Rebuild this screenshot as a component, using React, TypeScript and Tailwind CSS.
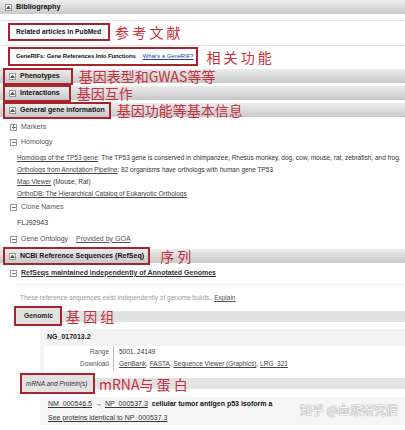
import React from "react";

const RED = "border-[#a9232d]";
const cn = "font-['Noto_Sans_CJK_SC',sans-serif] text-[#c4303c] text-[14px] leading-none";

function Tri() {
  return (
    <span className="inline-flex w-[7px] h-[7px] bg-white border border-[#999] items-center justify-center mr-[4px] shrink-0">
      <svg width="5" height="4" viewBox="0 0 5 4"><path d="M0 4 L2.5 0.5 L5 4 Z" fill="#555" /></svg>
    </span>
  );
}

function Box({ minus }: { minus?: boolean }) {
  return (
    <span className="inline-flex w-[7px] h-[7px] border border-[#999] items-center justify-center mr-[4px] shrink-0 relative">
      <span className="absolute w-[4px] h-px bg-[#777]" />
      {!minus && <span className="absolute h-[4px] w-px bg-[#777]" />}
    </span>
  );
}

function Bar({ title, pr, label }: { title: string; pr: string; label: string }) {
  return (
    <div className="h-[14px] flex items-center bg-gradient-to-b from-[#ececec] to-[#c9c9c9]">
      <div className={`ml-[3px] ${pr} h-[17px] border-2 ${RED} flex items-center pl-[4px] bg-gradient-to-b from-[#ececec] to-[#c9c9c9]`}>
        <Tri />
        <span className="font-bold text-[7px] text-[#111] whitespace-nowrap">{title}</span>
      </div>
      <span className={`${cn} ml-[6px]`}>{label}</span>
    </div>
  );
}

export default function App() {
  return (
    <div className="w-[405px] h-[430px] bg-white overflow-hidden relative font-['Liberation_Sans',Arial,sans-serif] text-[7px] text-[#333]">
      {/* Bibliography */}
      <div className="h-[14px] flex items-center pl-[5px] bg-gradient-to-b from-[#ededed] to-[#cacaca]">
        <Tri />
        <span className="font-bold text-[7.3px] text-[#111]">Bibliography</span>
      </div>
      <div className="mt-[6px] border-t border-[#e4e4e4]" />
      <div className="flex items-center mt-[2px] h-[18px]">
        <div className={`ml-[8px] h-[18px] border-2 ${RED} flex items-center pl-[6px] pr-[7px]`}>
          <span className="font-bold text-[6.7px] text-[#111] whitespace-nowrap">Related articles in PubMed</span>
        </div>
        <span className={`${cn} ml-[5px]`}>参 考 文 献</span>
      </div>
      <div className="mt-[4px] border-t border-[#e4e4e4]" />
      <div className="flex items-center mt-[1px] h-[19px]">
        <div className={`ml-[8px] h-[19px] border-2 ${RED} flex items-center pl-[6px] pr-[3px]`}>
          <span className="font-bold text-[6px] tracking-[-0.1px] text-[#111] whitespace-nowrap">GeneRIFs: Gene References Into Functions</span>
          <span className="ml-[7px] text-[5.8px] text-[#1d3f8a] underline whitespace-nowrap">What's a GeneRIF?</span>
        </div>
        <span className={`${cn} ml-[8px]`}>相 关 功 能</span>
      </div>
      <div className="mt-[3px] flex flex-col gap-[3px]">
        <Bar title="Phenotypes" pr="pr-[11px]" label="基因表型和GWAS等等" />
        <Bar title="Interactions" pr="pr-[9px]" label="基因互作" />
        <Bar title="General gene information" pr="pr-[4px]" label="基因功能等基本信息" />
      </div>

      <div className="pl-[10px] text-[#555]">
        <div className="mt-[5px] h-[10px] flex items-center"><Box /><span>Markers</span></div>
        <div className="mt-[5px] h-[10px] flex items-center"><Box minus /><span>Homology</span></div>
        <div className="mt-[5px] pl-[7px] text-[#333] leading-[12px] text-[6.5px] whitespace-nowrap">
          <div><span className="underline text-[#444]">Homologs of the TP53 gene</span>: The TP53 gene is conserved in chimpanzee, Rhesus monkey, dog, cow, mouse, rat, zebrafish, and frog.</div>
          <div><span className="underline text-[#444]">Orthologs from Annotation Pipeline</span>: 82 organisms have orthologs with human gene TP53</div>
          <div><span className="underline text-[#444]">Map Viewer</span> (Mouse, Rat)</div>
          <div><span className="underline text-[#444]">OrthoDB: The Hierarchical Catalog of Eukaryotic Orthologs</span></div>
        </div>
        <div className="mt-[2px] h-[10px] flex items-center"><Box minus /><span>Clone Names</span></div>
        <div className="mt-[6px] h-[10px] flex items-center pl-[7px] text-[#333]">FLJ92943</div>
        <div className="mt-[6px] h-[10px] flex items-center"><Box minus /><span>Gene Ontology</span><span className="ml-[8px] underline text-[#555]">Provided by GOA</span></div>
      </div>

      <div className="mt-[5px]">
        <div className="h-[14px] flex items-center bg-gradient-to-b from-[#ececec] to-[#c9c9c9]">
          <div className={`ml-[3px] h-[18px] border-2 ${RED} flex items-center pl-[4px] pr-[4px] bg-gradient-to-b from-[#ececec] to-[#c9c9c9]`}>
            <Tri />
            <span className="font-bold text-[7.1px] text-[#111] whitespace-nowrap">NCBI Reference Sequences (RefSeq)</span>
          </div>
          <span className={`${cn} ml-[10px]`}>序 列</span>
        </div>
      </div>

      <div className="pl-[10px]">
        <div className="mt-[5px] h-[10px] flex items-center"><Box minus /><span className="font-bold underline text-[#333] whitespace-nowrap text-[7px]">RefSeqs maintained independently of Annotated Genomes</span></div>
      </div>
      <div className="ml-[15px] mt-[6px] border-t border-[#ececec]" />
      <div className="mt-[8px] pl-[20px] h-[10px] flex items-center text-[#999] text-[6.5px] whitespace-nowrap">
        These reference sequences exist independently of genome builds.<span className="ml-[3px] underline text-[#555]">Explain</span>
      </div>

      {/* Genomic */}
      <div className="mt-[3px] ml-[15px] h-[20px] flex items-center">
        <div className="flex-1 h-[11px] bg-[#e2e2e2] flex items-center">
          <div className={`-ml-px w-[48px] h-[20px] border-2 ${RED} flex items-center pl-[8px] bg-[#e2e2e2]`}>
            <span className="font-bold text-[6.8px] text-[#222]">Genomic</span>
          </div>
          <span className={`${cn} ml-[4px]`}>基 因 组</span>
        </div>
      </div>

      <div className="mt-[3px] ml-[40px] bg-[#f3f3f3]">
        <div className="h-[17px] flex items-center pl-[7px] font-bold text-[#222] text-[7px]">NG_017013.2</div>
        <div className="bg-white ml-[4px] pb-[2px] text-[6.5px]">
          <div className="flex h-[12px] items-center">
            <span className="w-[70px] text-right pr-[4px] text-[#555] border-r border-[#bbb] h-full flex items-center justify-end">Range</span>
            <span className="pl-[5px] text-[#333]">5001..24149</span>
          </div>
          <div className="flex h-[12px] items-center">
            <span className="w-[70px] text-right pr-[4px] text-[#555] border-r border-[#bbb] h-full flex items-center justify-end">Download</span>
            <span className="pl-[5px] text-[#444] whitespace-nowrap"><span className="underline">GenBank</span>, <span className="underline">FASTA</span>, <span className="underline">Sequence Viewer (Graphics)</span>, <span className="underline">LRG_321</span></span>
          </div>
        </div>
      </div>

      {/* mRNA */}
      <div className="mt-[1px] ml-[20px] h-[21px] flex items-center">
        <div className="flex-1 h-[11px] bg-[#e2e2e2] flex items-center">
          <div className={`w-[75px] h-[21px] border-2 ${RED} flex items-center pl-[4px] bg-[#e2e2e2]`}>
            <span className="italic text-[6.5px] text-[#333] whitespace-nowrap">mRNA and Protein(s)</span>
          </div>
          <span className={`${cn} ml-[4px]`}>mRNA与 蛋 白</span>
        </div>
      </div>

      <div className="mt-[3px] ml-[40px] bg-[#f6f6f6] pl-[8px] text-[7px]">
        <div className="h-[14px] flex items-center whitespace-nowrap">
          <span className="underline text-[#333]">NM_000546.5</span>
          <span className="mx-[3px]">→</span>
          <span className="underline text-[#333]">NP_000537.3</span>
          <span className="ml-[4px] font-bold text-[#111]">cellular tumor antigen p53 isoform a</span>
        </div>
        <div className="h-[14px] flex items-center underline text-[#333]">See proteins identical to NP_000537.3</div>
      </div>

      <div className="absolute left-[300px] top-[401px] font-['Noto_Sans_CJK_SC',sans-serif] text-[12px] text-white whitespace-nowrap [text-shadow:0_0_1px_#888,0_0_1px_#888]">
        知乎 @血液研究僧
      </div>
    </div>
  );
}
